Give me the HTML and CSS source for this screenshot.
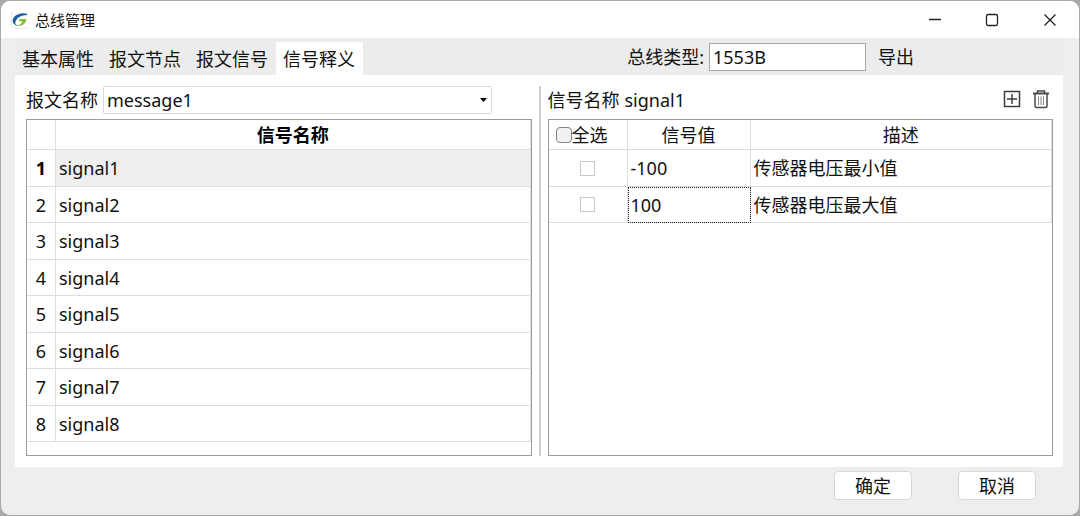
FILE: index.html
```html
<!DOCTYPE html>
<html lang="zh-CN">
<head>
<meta charset="utf-8">
<title>总线管理</title>
<link rel="stylesheet" href="styles.css">
</head>
<body>
<div class="window">
  <header class="titlebar">
    <svg class="logo" width="18" height="18" viewBox="0 0 18 18" aria-hidden="true">
      <path d="M.5 1v14a2 2 0 0 0 2 2H17" fill="none" stroke="#e6e6e6"/>
      <path d="M16 2.800C10 .8 2 4 1.600 9.500c-.1 2.300 1.200 4 3.400 4.500-.8-1.200-.9-2.500-.2-4C6.300 6.500 10.500 4 16 4.300z" fill="#1c62a0"/>
      <path d="M8.500 8h6.900c-.3 4.200-3.400 7.300-9.900 7 2.800-.6 5-2 5.800-4.700H7.800z" fill="#86bd3a"/>
      <path d="M3.500 12.500q1.500 1.800 4 1.300l-2 1.200q-1.500-.5-2-2.500z" fill="#4d9a7a"/>
    </svg>
    <h1 class="title">总线管理</h1>
    <div class="window-controls">
      <button class="window-button" aria-label="最小化"><svg width="14" height="14" viewBox="0 0 14 14"><path d="M2 6.500h12"/></svg></button>
      <button class="window-button" aria-label="最大化"><svg width="14" height="14" viewBox="0 0 14 14"><rect x="1.500" y="1.500" width="11" height="11" rx="1.500"/></svg></button>
      <button class="window-button" aria-label="关闭"><svg width="14" height="14" viewBox="0 0 14 14"><path d="M1.500 1.500l11 11M12.500 1.500l-11 11"/></svg></button>
    </div>
  </header>

  <main class="content">
    <div class="toolbar">
      <nav class="tabs" role="tablist">
        <button class="tab" role="tab" aria-selected="false">基本属性</button>
        <button class="tab" role="tab" aria-selected="false">报文节点</button>
        <button class="tab" role="tab" aria-selected="false">报文信号</button>
        <button class="tab tab-active" role="tab" aria-selected="true">信号释义</button>
      </nav>
      <div class="bus-type">
        <label for="bus-type">总线类型:</label>
        <input class="bus-input" id="bus-type" type="text" value="1553B">
        <button class="export">导出</button>
      </div>
    </div>

    <div class="panel">
      <section class="pane">
        <div class="pane-head">
          <label for="message">报文名称</label>
          <div class="select-wrap">
            <select class="select" id="message"><option>message1</option></select>
            <svg class="caret" width="7" height="4" viewBox="0 0 7 4" aria-hidden="true"><path d="M0 0h7L3.500 4z"/></svg>
          </div>
        </div>
        <div class="frame">
          <table class="table">
            <colgroup><col class="col-index"><col></colgroup>
            <thead><tr><th></th><th class="strong">信号名称</th></tr></thead>
            <tbody>
              <tr class="selected"><th class="strong" scope="row">1</th><td>signal1</td></tr>
              <tr><th scope="row">2</th><td>signal2</td></tr>
              <tr><th scope="row">3</th><td>signal3</td></tr>
              <tr><th scope="row">4</th><td>signal4</td></tr>
              <tr><th scope="row">5</th><td>signal5</td></tr>
              <tr><th scope="row">6</th><td>signal6</td></tr>
              <tr><th scope="row">7</th><td>signal7</td></tr>
              <tr><th scope="row">8</th><td>signal8</td></tr>
            </tbody>
          </table>
        </div>
      </section>

      <div class="splitter"></div>

      <section class="pane">
        <div class="pane-head">
          <span>信号名称</span>
          <span>signal1</span>
          <div class="actions">
            <button class="icon-button" aria-label="添加"><svg width="18" height="20" viewBox="0 0 18 20"><path d="M1.500 1.500h15v15h-15zM4 9h10M9 4v10" fill="none" stroke="#3c3c3c" stroke-width="1.500"/></svg></button>
            <button class="icon-button" aria-label="删除"><svg width="18" height="20" viewBox="0 0 18 20"><g fill="none" stroke="#484848"><path d="M1 3.500h16" stroke-width="2"/><path d="M5.500 3V1h7v2M3 4v12q0 1.500 1.500 1.500h9q1.500 0 1.500-1.500V4" stroke-width="1.500"/><path d="M6.500 6.500v8.500M9 6.500v8.500M11.500 6.500v8.500" stroke="#858585"/></g></svg></button>
          </div>
        </div>
        <div class="frame">
          <table class="table">
            <colgroup><col class="col-check"><col class="col-value"><col></colgroup>
            <thead>
              <tr>
                <th><label class="check-all"><input class="check check-round" type="checkbox">全选</label></th>
                <th>信号值</th>
                <th>描述</th>
              </tr>
            </thead>
            <tbody>
              <tr><td class="check-cell"><input class="check" type="checkbox" aria-label="选择 -100"></td><td>-100</td><td>传感器电压最小值</td></tr>
              <tr><td class="check-cell"><input class="check" type="checkbox" aria-label="选择 100"></td><td class="focused">100</td><td>传感器电压最大值</td></tr>
            </tbody>
          </table>
        </div>
      </section>
    </div>
  </main>

  <footer class="footer">
    <button class="button">确定</button>
    <button class="button">取消</button>
  </footer>
</div>
</body>
</html>
```

FILE: styles.css
```css
* {
  box-sizing: border-box;
}

body {
  margin: 0;
  padding: 1px;
  background: #a9a9ab;
  color: #111;
  font: 18px/24px "Noto Sans", "Noto Sans CJK SC", sans-serif;
}

button,
input,
select {
  margin: 0;
  padding: 0;
  border: 0;
  background: none;
  color: inherit;
  font: inherit;
}

.window {
  display: flex;
  flex-direction: column;
  min-height: calc(100vh - 2px);
  border-radius: 9px;
  background: #eee;
  overflow: hidden;
}

.titlebar {
  display: flex;
  align-items: center;
  height: 37px;
  padding-left: 10px;
  background: #fff;
}

.title {
  margin: 0 0 0 6px;
  font-size: 15px;
  font-weight: 400;
}

.window-controls {
  display: flex;
  margin-left: auto;
}

.window-button {
  display: grid;
  place-items: center;
  width: 58px;
  height: 36px;
}

.window-button svg {
  fill: none;
  stroke: #222;
  stroke-width: 1.3;
}

.content {
  display: flex;
  flex: 1;
  flex-direction: column;
  padding: 0 16px 0 14px;
}

.toolbar {
  display: flex;
  height: 37px;
  background: #ececec;
}

.tabs {
  display: flex;
  align-items: flex-end;
}

.tab {
  height: 33px;
  padding: 0 8px 0 7px;
}

.tab-active {
  background: #fff;
}

.bus-type {
  display: flex;
  align-items: center;
  margin-left: auto;
  padding-right: 149px;
}

.bus-input {
  width: 157px;
  height: 28px;
  margin: 0 12px 0 5px;
  padding: 0 3px;
  border: 1px solid #a6a6a6;
  background: #fff;
}

.panel {
  display: grid;
  flex: 1;
  grid-template-columns: 1fr 2px 1fr;
  column-gap: 7px;
  padding: 11px 10px 11px 11px;
  background: #fff;
}

.pane {
  display: flex;
  flex-direction: column;
}

.pane-head {
  display: flex;
  align-items: center;
  gap: 5px;
  height: 28px;
  margin-bottom: 5px;
}

.select-wrap {
  position: relative;
  flex: 1;
  margin-right: 40px;
}

.select {
  width: 100%;
  height: 28px;
  padding: 0 3px;
  border: 1px solid #d9d9d9;
  border-radius: 2px;
  appearance: none;
}

.caret {
  position: absolute;
  top: 12px;
  right: 5px;
  pointer-events: none;
}

.actions {
  display: flex;
  gap: 11px;
  margin-left: auto;
  padding-right: 3px;
}

.icon-button {
  display: flex;
}

.splitter {
  background: #d0d0d2;
}

.frame {
  flex: 1;
  border: 1px solid #9b9ba1;
}

.table {
  width: 100%;
  border-spacing: 0;
  table-layout: fixed;
}

.table th,
.table td {
  padding: 0 3px;
  border: 0 solid #dedede;
  border-width: 0 1px 1px 0;
  font-weight: 400;
  text-align: left;
}

.table th {
  text-align: center;
}

.table th.strong {
  color: #000;
  font-weight: 700;
}

.table thead tr {
  height: 30px;
}

.table tbody tr {
  height: 36px;
}

.table tbody tr:nth-child(odd) {
  height: 37px;
}

.selected td {
  background: #efefef;
}

.col-index {
  width: 29px;
}

.col-check {
  width: 79px;
}

.col-value {
  width: 123px;
}

.check-all {
  display: flex;
  align-items: center;
  padding-left: 4px;
}

.check {
  display: block;
  width: 15px;
  height: 15px;
  border: 1px solid #c8c8c8;
  appearance: none;
}

.check-round {
  width: 16px;
  height: 16px;
  border-color: #858585;
  border-radius: 4px;
  background: #f1f1f1;
}

.check-cell .check {
  margin: 0 auto;
}

.table .focused {
  outline: 1px dotted #222;
  outline-offset: -1px;
}

.footer {
  display: flex;
  justify-content: flex-end;
  gap: 46px;
  padding: 4px 43px 15px;
}

.button {
  width: 78px;
  height: 29px;
  border: 1px solid #d8d8d8;
  border-radius: 4px;
  background: #fff;
}
```
